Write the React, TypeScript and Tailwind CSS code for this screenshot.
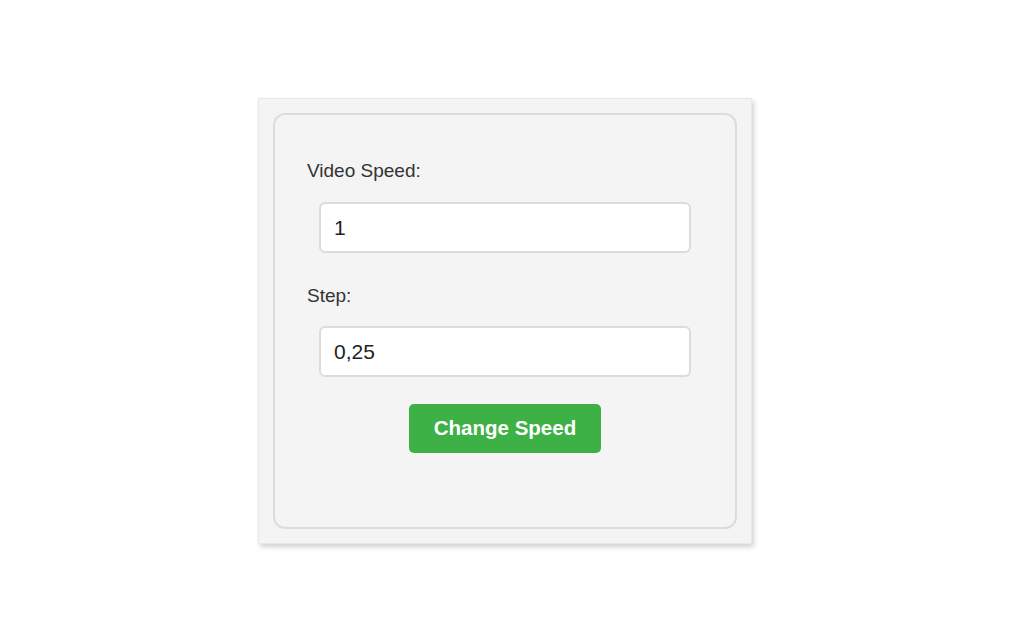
import React from "react";

export default function App() {
  return (
    <div className="w-[1020px] h-[638px] bg-white flex justify-center pt-[98px] pr-[10px]" style={{ fontFamily: '"Liberation Sans", Arial, sans-serif' }}>
      <div className="w-[494px] h-[446px] bg-[#f4f4f4] border border-[#e8e8e8] shadow-[2px_3px_5px_rgba(0,0,0,0.18)] p-[14px]">
        <div className="h-full border-2 border-[#dcdcdc] rounded-[12px] flex flex-col pt-[44px] px-[32px]">
          <label className="h-[24px] leading-[24px] text-[19px] text-[#333]">Video Speed:</label>
          <input
            defaultValue="1"
            className="mt-[19px] self-center w-[372px] h-[51px] bg-white border-2 border-[#dcdcdc] rounded-[6px] px-[13px] text-[21px] text-[#222] outline-none"
          />
          <label className="mt-[31px] h-[24px] leading-[24px] text-[19px] text-[#333]">Step:</label>
          <input
            defaultValue="0,25"
            className="mt-[18px] self-center w-[372px] h-[51px] bg-white border-2 border-[#dcdcdc] rounded-[6px] px-[13px] text-[21px] text-[#222] outline-none"
          />
          <button className="mt-[27px] self-center w-[192px] h-[49px] bg-[#3db146] rounded-[5px] text-white text-[20.5px] font-bold">
            Change Speed
          </button>
        </div>
      </div>
    </div>
  );
}
